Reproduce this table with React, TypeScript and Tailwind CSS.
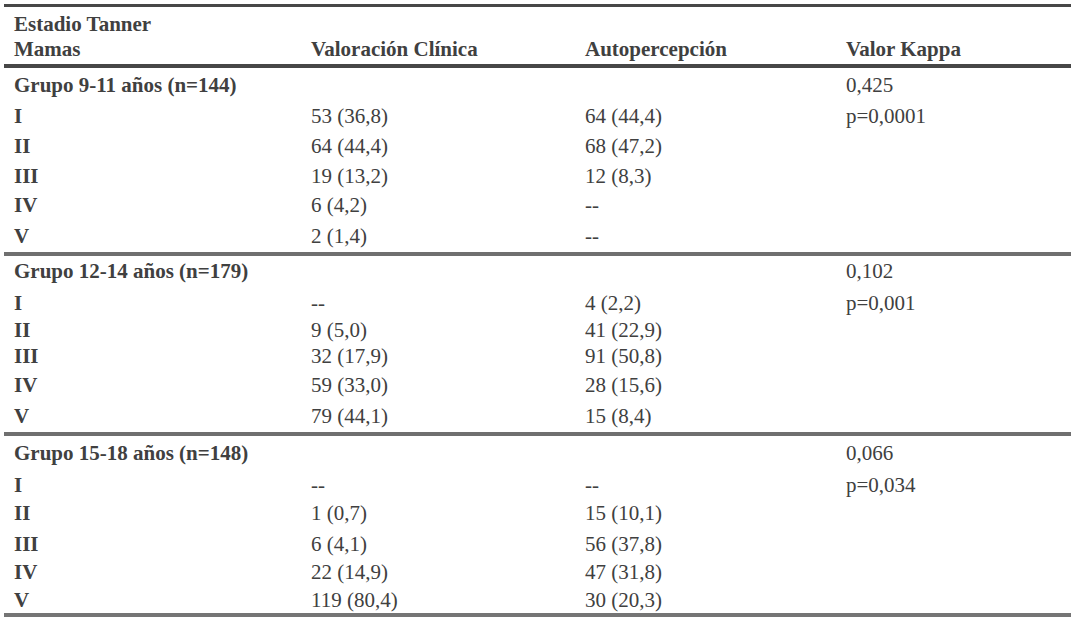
import React from "react";

type Row = { label: string; clin: string; auto: string; kappa?: string; h: number };
type Group = { title: string; kappa: string; titleH: number; pb: string; line: string; rows: Row[] };

const groups: Group[] = [
  {
    title: "Grupo 9-11 años (n=144)",
    kappa: "0,425",
    titleH: 28,
    pb: "pb-[5px]",
    line: "border-[#6f6f6f]",
    rows: [
      { label: "I", clin: "53 (36,8)", auto: "64 (44,4)", kappa: "p=0,0001", h: 31 },
      { label: "II", clin: "64 (44,4)", auto: "68 (47,2)", h: 30 },
      { label: "III", clin: "19 (13,2)", auto: "12 (8,3)", h: 30 },
      { label: "IV", clin: "6 (4,2)", auto: "--", h: 29 },
      { label: "V", clin: "2 (1,4)", auto: "--", h: 31 },
    ],
  },
  {
    title: "Grupo 12-14 años (n=179)",
    kappa: "0,102",
    titleH: 26,
    pb: "pb-[5px]",
    line: "border-[#6f6f6f]",
    rows: [
      { label: "I", clin: "--", auto: "4 (2,2)", kappa: "p=0,001", h: 32 },
      { label: "II", clin: "9 (5,0)", auto: "41 (22,9)", h: 27 },
      { label: "III", clin: "32 (17,9)", auto: "91 (50,8)", h: 26 },
      { label: "IV", clin: "59 (33,0)", auto: "28 (15,6)", h: 29 },
      { label: "V", clin: "79 (44,1)", auto: "15 (8,4)", h: 31 },
    ],
  },
  {
    title: "Grupo 15-18 años (n=148)",
    kappa: "0,066",
    titleH: 28,
    pb: "pb-[2px]",
    line: "border-[#757575]",
    rows: [
      { label: "I", clin: "--", auto: "--", kappa: "p=0,034", h: 32 },
      { label: "II", clin: "1 (0,7)", auto: "15 (10,1)", h: 28 },
      { label: "III", clin: "6 (4,1)", auto: "56 (37,8)", h: 31 },
      { label: "IV", clin: "22 (14,9)", auto: "47 (31,8)", h: 28 },
      { label: "V", clin: "119 (80,4)", auto: "30 (20,3)", h: 28 },
    ],
  },
];

const cols = "grid grid-cols-[297px_274px_261px_1fr] items-end";
const cell = "pl-[10px] pb-[1px] whitespace-nowrap";

function Line({ h, children }: { h: number; children: React.ReactNode }) {
  return (
    <div className={cols} style={{ height: h }}>
      {children}
    </div>
  );
}

export default function App() {
  return (
    <main className="min-h-screen bg-white pt-[4px] pl-[4px] text-[#404040] font-['Liberation_Serif','Times_New_Roman',serif] text-[21px] leading-[20px]">
      <div className="w-full border-t-[3px] border-[#474747]">
        {/* Header */}
        <div className="pb-[4px] border-b-[4px] border-[#474747] font-bold">
          <Line h={28}>
            <div className={cell}>Estadio Tanner</div>
            <div />
            <div />
            <div />
          </Line>
          <Line h={25}>
            <div className={cell}>Mamas</div>
            <div className={cell}>Valoración Clínica</div>
            <div className={cell}>Autopercepción</div>
            <div className={cell}>Valor Kappa</div>
          </Line>
        </div>

        {groups.map((g) => (
          <div key={g.title} className={`${g.pb} border-b-[4px] ${g.line}`}>
            <Line h={g.titleH}>
              <div className={`${cell} font-bold`}>{g.title}</div>
              <div />
              <div />
              <div className={cell}>{g.kappa}</div>
            </Line>
            {g.rows.map((r) => (
              <Line key={r.label} h={r.h}>
                <div className={`${cell} font-bold`}>{r.label}</div>
                <div className={cell}>{r.clin}</div>
                <div className={cell}>{r.auto}</div>
                <div className={cell}>{r.kappa ?? ""}</div>
              </Line>
            ))}
          </div>
        ))}
      </div>
    </main>
  );
}
